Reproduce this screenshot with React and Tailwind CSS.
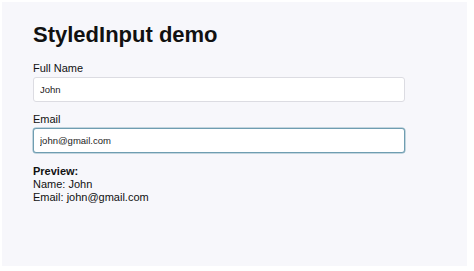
import { useState } from "react";

function StyledInput({ label, value, onChange, focused, className = "" }) {
  return (
    <label className={`block ${className}`}>
      <span className="block text-[11px] leading-[13px] text-[#111]">{label}</span>
      <input
        type="text"
        value={value}
        onChange={(e) => onChange(e.target.value)}
        className={`mt-[2px] block w-[372px] h-[25px] rounded-[3px] bg-white px-[6px] text-[9.5px] text-[#222] outline-none border ${
          focused ? "border-[#6f9db1] shadow-[0_0_0_0.5px_#8fb3c2]" : "border-[#dcdce2]"
        }`}
      />
    </label>
  );
}

export default function App() {
  const [name, setName] = useState("John");
  const [email, setEmail] = useState("john@gmail.com");

  return (
    <div className="w-[474px] h-[271px] bg-white pt-[2px] pl-[2px]" style={{ fontFamily: '"Liberation Sans", Arial, sans-serif' }}>
      <div className="w-[465px] h-[264px] bg-[#f7f7fb] pl-[31px] pt-[20px] text-[#111]">
        <h1 className="text-[22px] leading-[26px] font-bold">StyledInput demo</h1>

        <StyledInput label="Full Name" value={name} onChange={setName} className="mt-[14px]" />
        <StyledInput label="Email" value={email} onChange={setEmail} focused className="mt-[11px]" />

        <div className="mt-[12px] text-[11px] leading-[13px]">
          <div className="font-bold">Preview:</div>
          <div>Name: {name}</div>
          <div>Email: {email}</div>
        </div>
      </div>
    </div>
  );
}
